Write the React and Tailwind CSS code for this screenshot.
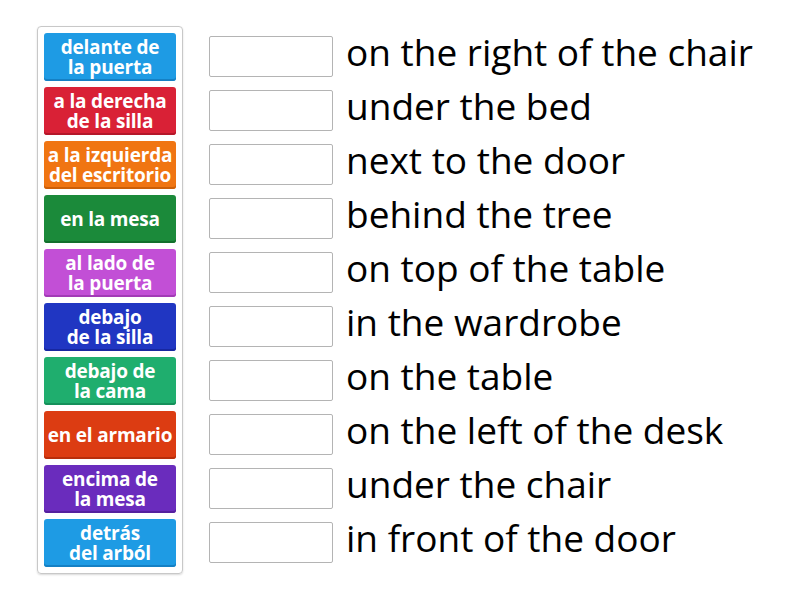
import React from "react";

const TILES = [
  { text: ["delante de", "la puerta"], bg: "bg-[#1e9be4]", edge: "shadow-[inset_0_-2px_0_#1580c4]" },
  { text: ["a la derecha", "de la silla"], bg: "bg-[#d92136]", edge: "shadow-[inset_0_-2px_0_#b5172a]" },
  { text: ["a la izquierda", "del escritorio"], bg: "bg-[#f07512]", edge: "shadow-[inset_0_-2px_0_#cc5f08]" },
  { text: ["en la mesa"], bg: "bg-[#1b8a3a]", edge: "shadow-[inset_0_-2px_0_#12702c]" },
  { text: ["al lado de", "la puerta"], bg: "bg-[#c24fd6]", edge: "shadow-[inset_0_-2px_0_#a23bb6]" },
  { text: ["debajo", "de la silla"], bg: "bg-[#2036c2]", edge: "shadow-[inset_0_-2px_0_#1727a0]" },
  { text: ["debajo de", "la cama"], bg: "bg-[#1fae6e]", edge: "shadow-[inset_0_-2px_0_#15905a]" },
  { text: ["en el armario"], bg: "bg-[#dc3c12]", edge: "shadow-[inset_0_-2px_0_#b82e0b]" },
  { text: ["encima de", "la mesa"], bg: "bg-[#6a2cbd]", edge: "shadow-[inset_0_-2px_0_#55209e]" },
  { text: ["detrás", "del arból"], bg: "bg-[#1e9be4]", edge: "shadow-[inset_0_-2px_0_#1580c4]" },
];

const PHRASES = [
  "on the right of the chair",
  "under the bed",
  "next to the door",
  "behind the tree",
  "on top of the table",
  "in the wardrobe",
  "on the table",
  "on the left of the desk",
  "under the chair",
  "in front of the door",
];

const App = () => {
  return (
    <div
      className="w-[800px] h-[600px] bg-white flex items-start pt-[26px] pl-[37px]"
      style={{ fontFamily: '"Open Sans", sans-serif' }}
    >
      <div className="w-[146px] border border-[#c8c8c8] rounded-[4px] p-[6px] flex flex-col gap-[6px] shadow-[0_1px_2px_rgba(0,0,0,0.15)]">
        {TILES.map((ele, ind) => (
          <div
            key={`${ele.text[0]}${ind}`}
            className={`h-[48px] rounded-[3px] flex flex-col items-center justify-center text-white font-bold text-[19px] leading-[20px] tracking-[-0.2px] whitespace-nowrap ${ele.bg} ${ele.edge}`}
          >
            {ele.text.map((line) => (
              <span key={line}>{line}</span>
            ))}
          </div>
        ))}
      </div>
      <div className="ml-[26px] pt-[6px] flex flex-col gap-[6px]">
        {PHRASES.map((ele) => (
          <div key={ele} className="h-[48px] flex items-center">
            <div className="w-[124px] h-[41px] border border-[#b4b4b4] rounded-[2px] bg-white" />
            <span className="ml-[13px] mb-[8px] text-[37px] text-black leading-[40px] whitespace-nowrap">
              {ele}
            </span>
          </div>
        ))}
      </div>
    </div>
  );
};

export default App;
